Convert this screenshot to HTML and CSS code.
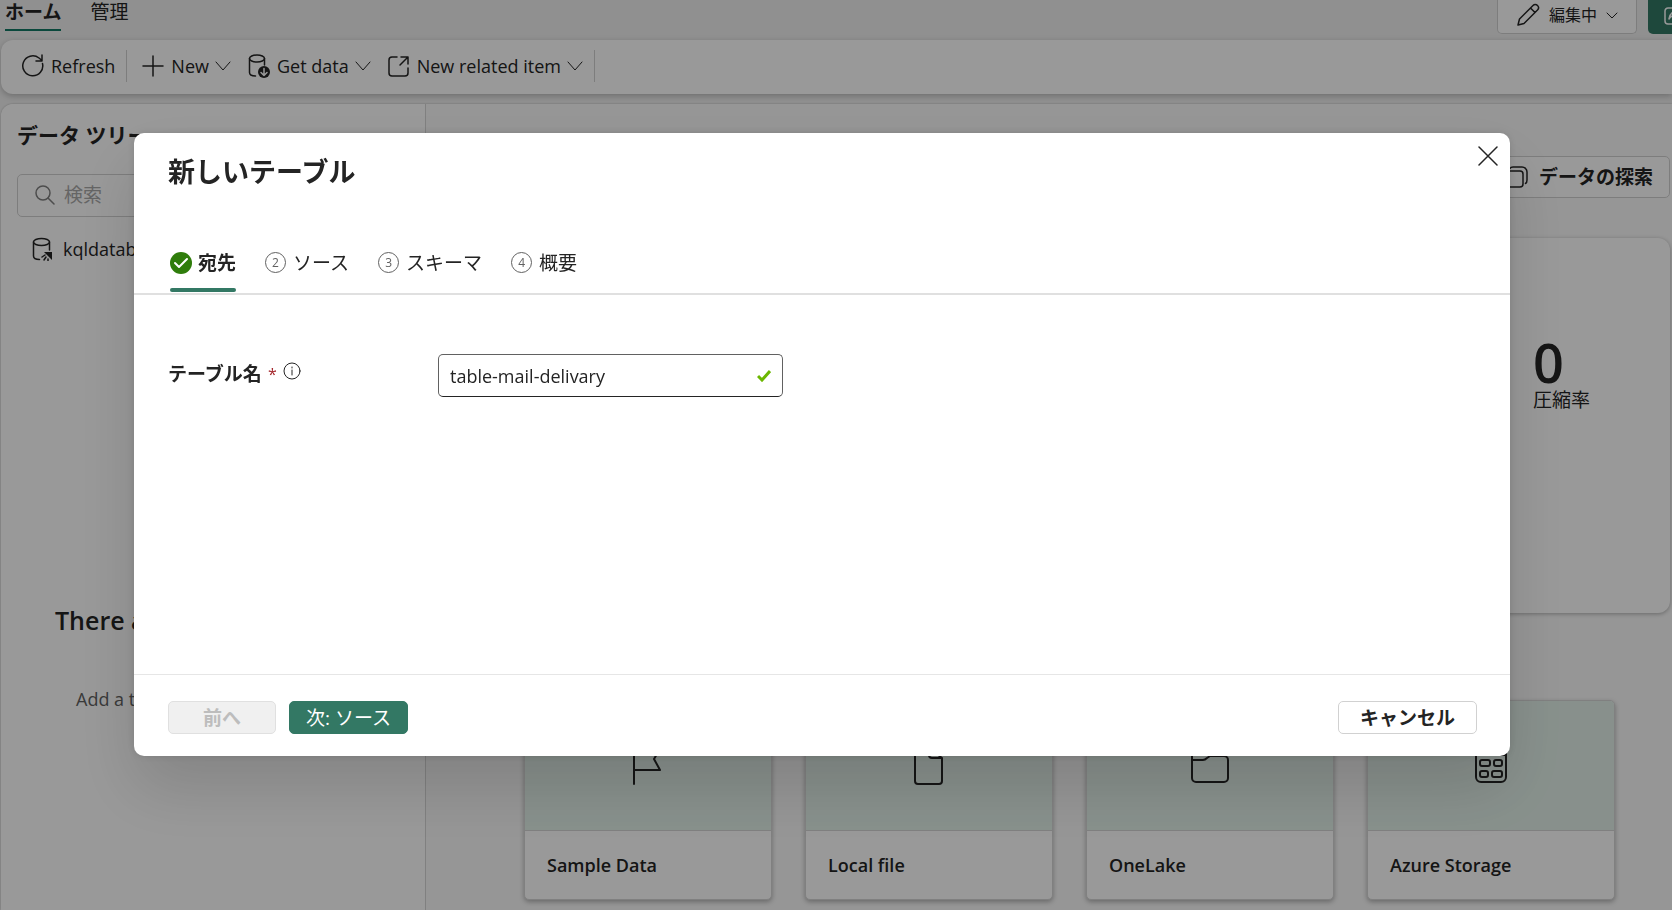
FILE: index.html
```html
<!DOCTYPE html>
<html lang="ja">
<head>
  <meta charset="UTF-8" />
  <meta name="viewport" content="width=device-width, initial-scale=1.0" />
  <title>新しいテーブル</title>
  <link rel="stylesheet" href="styles.css">
</head>
<body>
  <div class="page">
    <header class="topbar">
      <nav class="tabs">
        <a href="#home" class="tab active">ホーム</a>
        <a href="#manage" class="tab">管理</a>
      </nav>
      <div class="top-actions">
        <button class="edit-mode">
          <svg width="24" height="24" viewBox="0 0 24 24"><path d="M2 22l1.500-6L17 2.500a3 3 0 0 1 4.500 4.500L8 20.500zM14.500 5l4.500 4.500"/></svg>
          <span>編集中</span>
          <svg class="chevron" width="12" height="12" viewBox="0 0 12 12"><path d="M1 4l5 5 5-5"/></svg>
        </button>
        <button class="share" aria-label="共有">
          <svg width="20" height="20" viewBox="0 0 20 20"><path d="M8 2H4a3 3 0 0 0-3 3v10a3 3 0 0 0 3 3h10a3 3 0 0 0 3-3M5 13c1-5 4-8 8-8V2l6 5-6 5V9c-3 0-6 1-8 4z"/></svg>
        </button>
      </div>
    </header>

    <div class="toolbar">
      <button class="tool">
        <svg width="24" height="24" viewBox="0 0 24 24"><path d="M21.500 9.500A10 10 0 1 1 18 4l3 2.500M21 1v6h-6"/></svg>
        <span>Refresh</span>
      </button>
      <span class="separator"></span>
      <button class="tool">
        <svg width="24" height="24" viewBox="0 0 24 24"><path d="M12 2v20M2 12h20"/></svg>
        <span>New</span>
        <svg class="chevron" width="16" height="16" viewBox="0 0 16 16"><path d="M1 4l7 8 7-8"/></svg>
      </button>
      <button class="tool">
        <svg width="24" height="24" viewBox="0 0 24 24"><ellipse cx="10" cy="4.500" rx="7.500" ry="3.500"/><path d="M2.500 4.500v14c0 2 2.500 3.500 6 3.500M17.500 4.500V11"/><circle class="solid" cx="17" cy="18" r="6"/><path class="cutout" d="M17 14.500v7M14 18.500l3 3 3-3"/></svg>
        <span>Get data</span>
        <svg class="chevron" width="16" height="16" viewBox="0 0 16 16"><path d="M1 4l7 8 7-8"/></svg>
      </button>
      <button class="tool">
        <svg width="24" height="24" viewBox="0 0 24 24"><path d="M10 3H5a3 3 0 0 0-3 3v13a3 3 0 0 0 3 3h13a3 3 0 0 0 3-3v-5M14 3h7v7M21 3l-8 8"/></svg>
        <span>New related item</span>
        <svg class="chevron" width="16" height="16" viewBox="0 0 16 16"><path d="M1 4l7 8 7-8"/></svg>
      </button>
      <span class="separator"></span>
    </div>

    <div class="workspace">
      <aside class="tree">
        <h2>データ ツリー</h2>
        <label class="search">
          <svg width="20" height="20" viewBox="0 0 20 20"><circle cx="8" cy="8" r="7"/><path d="M13 13l6 6"/></svg>
          <input type="search" placeholder="検索" aria-label="検索">
        </label>
        <a href="#kqldatabase" class="tree-item">
          <svg width="22" height="24" viewBox="0 0 22 24"><ellipse cx="9.500" cy="5" rx="8" ry="3.500"/><path d="M1.500 5v14c0 2 2 3.500 6 3.500M17.500 5v8"/><path class="solid" d="M12 15h8v8z"/><path d="M10 20l3-2M12 23l2-3M16 24v-2"/></svg>
          <span>kqldatabase</span>
        </a>
        <div class="empty">
          <h3>There are no tables</h3>
          <p>Add a table</p>
        </div>
      </aside>

      <main class="content">
        <div class="content-actions">
          <button class="explore">
            <svg width="24" height="24" viewBox="0 0 24 24"><rect x="1" y="6" width="17" height="16" rx="3"/><path d="M5 3.500C5.500 2.500 6.500 2 8 2h9a5 5 0 0 1 5 5v8c0 2-.5 3-1.500 3.500"/></svg>
            <span>データの探索</span>
          </button>
        </div>
        <section class="stats">
          <div class="stat">
            <strong>0</strong>
            <span>圧縮率</span>
          </div>
        </section>
        <section class="sources">
          <a href="#sample" class="source">
            <span class="source-icon"><svg width="40" height="40" viewBox="0 0 40 40"><path d="M6 38V3h26l-6 10 6 11H6"/></svg></span>
            <span class="source-name">Sample Data</span>
          </a>
          <a href="#file" class="source">
            <span class="source-icon"><svg width="40" height="40" viewBox="0 0 40 40"><path d="M20 2H9a3 3 0 0 0-3 3v30a3 3 0 0 0 3 3h21a3 3 0 0 0 3-3V12zM20 2v7a3 3 0 0 0 3 3h10"/></svg></span>
            <span class="source-name">Local file</span>
          </a>
          <a href="#onelake" class="source">
            <span class="source-icon"><svg width="40" height="40" viewBox="0 0 40 40"><path d="M2 12V8a4 4 0 0 1 4-4h9l5 6h14a4 4 0 0 1 4 4v18a4 4 0 0 1-4 4H6a4 4 0 0 1-4-4zM2 14h11c2 0 3-1 4-2l3-2"/></svg></span>
            <span class="source-name">OneLake</span>
          </a>
          <a href="#azure" class="source">
            <span class="source-icon"><svg width="40" height="40" viewBox="0 0 40 40"><rect x="5" y="2" width="30" height="34" rx="5"/><path d="M5 9h30"/><rect x="9" y="14" width="10" height="6" rx="2"/><rect x="23" y="14" width="8" height="6" rx="2"/><rect x="9" y="25" width="8" height="6" rx="2"/><rect x="21" y="25" width="10" height="6" rx="2"/></svg></span>
            <span class="source-name">Azure Storage</span>
          </a>
        </section>
      </main>
    </div>
  </div>

  <div class="overlay">
    <div class="dialog" role="dialog" aria-modal="true" aria-labelledby="dialog-title">
      <div class="dialog-header">
        <h1 id="dialog-title">新しいテーブル</h1>
        <button class="close" aria-label="閉じる">
          <svg width="20" height="20" viewBox="0 0 20 20"><path d="M1 1l18 18M19 1L1 19"/></svg>
        </button>
      </div>

      <ol class="steps">
        <li class="step current">
          <svg width="22" height="22" viewBox="0 0 22 22"><circle cx="11" cy="11" r="11"/><path d="M5 11l4 4 8-8"/></svg>
          <span>宛先</span>
        </li>
        <li class="step"><span class="number">2</span><span>ソース</span></li>
        <li class="step"><span class="number">3</span><span>スキーマ</span></li>
        <li class="step"><span class="number">4</span><span>概要</span></li>
      </ol>

      <form class="dialog-body">
        <div class="field-label">
          <label for="table-name">テーブル名</label>
          <span class="required">*</span>
          <svg class="info" width="18" height="18" viewBox="0 0 18 18"><circle cx="9" cy="9" r="8"/><path d="M9 8v5M9 5v1"/></svg>
        </div>
        <div class="field">
          <input id="table-name" type="text" value="table-mail-delivary" required>
          <svg width="14" height="12" viewBox="0 0 14 12"><path d="M1 6l4 4 8-9"/></svg>
        </div>
      </form>

      <div class="dialog-footer">
        <button class="btn" disabled>前へ</button>
        <button class="btn primary">次: ソース</button>
        <button class="btn cancel">キャンセル</button>
      </div>
    </div>
  </div>
</body>
</html>
```

FILE: styles.css
```css
* {
  box-sizing: border-box;
}

body {
  margin: 0;
  background: #f0f0f0;
  color: #242424;
  font-family: "Open Sans", "Noto Sans CJK JP", sans-serif;
  font-size: 19px;
  line-height: 28px;
  overflow: hidden;
}

button,
input {
  font: inherit;
  color: inherit;
}

button {
  margin: 0;
  padding: 0;
  border: none;
  background: none;
  white-space: nowrap;
  cursor: pointer;
}

a {
  color: inherit;
  text-decoration: none;
}

h1,
h2,
h3,
p {
  margin: 0;
}

svg {
  flex: none;
  fill: none;
  stroke: currentColor;
  stroke-width: 1.5;
  stroke-linecap: round;
  stroke-linejoin: round;
}

.page {
  display: flex;
  flex-direction: column;
  height: 100vh;
}

/* top bar */

.topbar {
  display: flex;
  justify-content: space-between;
  align-items: flex-start;
  height: 40px;
  flex: none;
}

.tabs {
  display: flex;
  gap: 29px;
  padding-left: 5px;
}

.tab {
  height: 31px;
  line-height: 24px;
}

.tab.active {
  font-weight: 700;
  border-bottom: 2px solid #117865;
}

.top-actions {
  display: flex;
  gap: 11px;
}

.edit-mode {
  display: flex;
  align-items: center;
  gap: 9px;
  width: 140px;
  height: 34px;
  padding: 0 18px 4px;
  background: #fff;
  border: 1px solid #d1d1d1;
  border-top: none;
  border-radius: 0 0 5px 5px;
  font-size: 16px;
}

.share {
  width: 24px;
  height: 34px;
  padding: 0 0 2px 16px;
  overflow: hidden;
  background: #337864;
  border-radius: 0 0 0 5px;
  color: #fff;
}

.share svg {
  display: block;
}

/* toolbar */

.toolbar {
  display: flex;
  align-items: center;
  flex: none;
  height: 54px;
  margin-left: 1px;
  padding: 0 0 2px 20px;
  background: #fff;
  border-radius: 12px 0 0 12px;
  box-shadow: 0 2px 6px rgba(0, 0, 0, 0.24);
  font-size: 18px;
}

.tool {
  display: flex;
  align-items: center;
  gap: 6px;
  margin-right: 11px;
}

.tool + .tool {
  margin-left: 5px;
}

.chevron {
  stroke-width: 1;
}

.separator {
  width: 1px;
  height: 32px;
  margin-right: 14px;
  background: #d1d1d1;
}

.solid {
  fill: currentColor;
  stroke: none;
}

.cutout {
  stroke: #fff;
}

/* workspace */

.workspace {
  display: flex;
  flex: 1;
  min-height: 0;
  margin: 10px 0 0 1px;
  overflow: hidden;
  background: #fafafa;
  border-radius: 12px 0 0 0;
  box-shadow: 0 0 2px rgba(0, 0, 0, 0.3);
}

.tree {
  flex: none;
  width: 425px;
  padding: 17px 16px;
  background: #fff;
  border-right: 1px solid #d6d6d6;
}

.tree h2 {
  font-size: 21px;
  font-weight: 700;
  line-height: 28px;
}

.search {
  display: flex;
  align-items: center;
  gap: 9px;
  height: 43px;
  margin-top: 25px;
  padding: 0 17px 2px;
  border: 1px solid #d1d1d1;
  border-radius: 5px;
  color: #808080;
}

.search input {
  flex: 1;
  min-width: 0;
  padding: 0;
  border: none;
  outline: none;
  background: none;
}

.search input::placeholder {
  color: #a8a8a8;
}

.tree-item {
  display: flex;
  align-items: center;
  gap: 9px;
  margin-top: 18px;
  padding-left: 15px;
  font-size: 18px;
}

.empty {
  margin-top: 339px;
  padding-left: 38px;
}

.empty h3 {
  font-size: 25px;
  font-weight: 600;
  line-height: 36px;
}

.empty p {
  margin-top: 47px;
  padding-left: 21px;
  color: #616161;
  font-size: 18px;
}

.content {
  flex: 1;
  min-width: 0;
  padding: 52px 2px 0 0;
}

.content-actions {
  display: flex;
  justify-content: flex-end;
}

.explore {
  display: flex;
  align-items: center;
  gap: 10px;
  height: 42px;
  padding: 0 16px;
  background: #fff;
  border: 1px solid #d1d1d1;
  border-radius: 5px;
  font-weight: 700;
}

.stats {
  display: flex;
  justify-content: flex-end;
  height: 375px;
  margin: 40px 0 0 24px;
  padding: 100px 0 0;
  background: #fff;
  border-radius: 12px;
  box-shadow: 0 1px 4px rgba(0, 0, 0, 0.3);
}

.stat {
  display: flex;
  flex-direction: column;
  width: 137px;
}

.stat strong {
  font-size: 54px;
  font-weight: 600;
  line-height: 48px;
}

.sources {
  display: grid;
  grid-template-columns: repeat(4, 1fr);
  gap: 33px;
  margin: 87px 55px 0 98px;
}

.source {
  overflow: hidden;
  background: #fff;
  border: 1px solid #d6d6d6;
  border-radius: 5px;
  box-shadow: 0 2px 5px rgba(0, 0, 0, 0.3);
}

.source-icon {
  display: flex;
  justify-content: center;
  align-items: center;
  height: 130px;
  background: #e3f1ea;
  border-bottom: 1px solid #d6d6d6;
}

.source-icon svg {
  stroke-width: 2;
}

.source-name {
  display: block;
  padding: 20px 22px;
  font-size: 18px;
  font-weight: 600;
}

/* dialog */

.overlay {
  position: fixed;
  inset: 0;
  display: flex;
  padding: 133px 162px 154px 134px;
  background: rgba(0, 0, 0, 0.4);
}

.dialog {
  display: flex;
  flex-direction: column;
  flex: 1;
  background: #fff;
  border-radius: 10px;
  box-shadow: 0 0 8px rgba(0, 0, 0, 0.12), 0 32px 64px rgba(0, 0, 0, 0.14);
}

.dialog-header {
  display: flex;
  justify-content: space-between;
  align-items: flex-start;
  padding: 13px 12px 0 34px;
}

.dialog-header h1 {
  padding-top: 7px;
  font-size: 27px;
  font-weight: 700;
  line-height: 38px;
}

.close {
  display: flex;
}

.steps {
  display: flex;
  gap: 29px;
  margin: 51px 0 0;
  padding: 0 36px;
  list-style: none;
  border-bottom: 2px solid #e0e0e0;
}

.step {
  display: flex;
  gap: 7px;
  align-items: center;
  height: 51px;
  padding-bottom: 10px;
}

.step.current {
  position: relative;
  gap: 6px;
  font-weight: 700;
}

.step.current::after {
  content: "";
  position: absolute;
  left: 0;
  right: 0;
  bottom: 1px;
  height: 4px;
  border-radius: 2px;
  background: #337864;
}

.step circle {
  fill: #2f7d0b;
  stroke: none;
}

.step path {
  stroke: #fff;
  stroke-width: 2;
}

.number {
  width: 21px;
  height: 21px;
  border: 1px solid #616161;
  border-radius: 50%;
  color: #616161;
  font-size: 12px;
  line-height: 20px;
  text-align: center;
}

.dialog-body {
  display: flex;
  flex: 1;
  align-items: flex-start;
  padding: 59px 34px 0;
}

.field-label {
  display: flex;
  align-items: center;
  gap: 6px;
  width: 270px;
  padding-top: 6px;
  font-weight: 700;
}

.required {
  color: #a4262c;
  font-size: 16px;
  font-weight: 400;
}

.info {
  margin-bottom: 6px;
  stroke-width: 1;
}

.field {
  display: flex;
  align-items: center;
  width: 345px;
  height: 43px;
  padding: 0 11px;
  border: 1px solid #616161;
  border-bottom-color: #242424;
  border-radius: 5px;
}

.field input {
  flex: 1;
  min-width: 0;
  padding: 0;
  border: none;
  outline: none;
  font-size: 18px;
}

.field svg {
  color: #6bb700;
  stroke-width: 3;
  stroke-linecap: butt;
  stroke-linejoin: miter;
}

.dialog-footer {
  display: flex;
  gap: 13px;
  padding: 26px 33px 22px 34px;
  border-top: 1px solid #e6e6e6;
}

.btn {
  height: 33px;
  padding: 0 17px;
  background: #fff;
  border: 1px solid #d1d1d1;
  border-radius: 5px;
  line-height: 30px;
}

.btn:disabled {
  min-width: 108px;
  background: #f0f0f0;
  border-color: #e0e0e0;
  color: #bdbdbd;
  font-weight: 700;
}

.btn.primary {
  min-width: 119px;
  padding: 0 12px;
  background: #337864;
  border-color: #337864;
  color: #fff;
}

.btn.cancel {
  min-width: 139px;
  margin-left: auto;
  font-weight: 700;
}
```
